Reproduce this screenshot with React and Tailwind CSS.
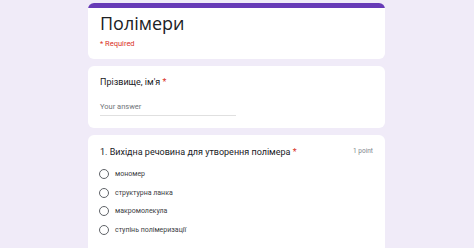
export default function App() {
  const options = ["мономер", "структурна ланка", "макромолекула", "ступінь полімеризації"];
  return (
    <div className="w-[474px] h-[248px] overflow-hidden bg-[#f0ebf8] font-['Roboto',sans-serif]">
      <div className="w-[297px] ml-[88px] pt-[3px] flex flex-col gap-[7px]">
        <div className="bg-white rounded-[6px] overflow-hidden h-[56px]">
          <div className="h-[5px] bg-[#673ab7]" />
          <div className="pl-[12px] pt-[3px]">
            <div className="text-[18px] leading-[24px] text-[#202124] font-['Open_Sans',sans-serif]">Полімери</div>
            <div className="text-[7.5px] leading-[10px] text-[#d93025] mt-[4px]">* Required</div>
          </div>
        </div>
        <div className="bg-white rounded-[6px] h-[62px] pl-[12px] pt-[10px]">
          <div className="text-[9px] leading-[12px] text-[#202124]">
            Прізвище, ім'я <span className="text-[#d93025]">*</span>
          </div>
          <div className="mt-[14px] w-[136px] border-b border-[#e0e0e0] pb-[3px] text-[7.5px] leading-[10px] text-[#70757a]">
            Your answer
          </div>
        </div>
        <div className="bg-white rounded-[6px] h-[120px] pl-[12px] pr-[12px] pt-[11px]">
          <div className="flex justify-between items-center">
            <div className="text-[9px] leading-[12px] text-[#202124]">
              1. Вихідна речовина для утворення полімера <span className="text-[#d93025]">*</span>
            </div>
            <div className="text-[6.5px] text-[#80868b]">1 point</div>
          </div>
          <div className="mt-[11px] flex flex-col gap-[8px]">
            {options.map((o) => (
              <div key={o} className="flex items-center gap-[6px] h-[10.5px]">
                <div className="w-[10px] h-[10px] rounded-full border-[1.5px] border-[#5f6368] ml-[-1px]" />
                <div className="text-[7px] text-[#3c4043]">{o}</div>
              </div>
            ))}
          </div>
        </div>
      </div>
    </div>
  );
}
